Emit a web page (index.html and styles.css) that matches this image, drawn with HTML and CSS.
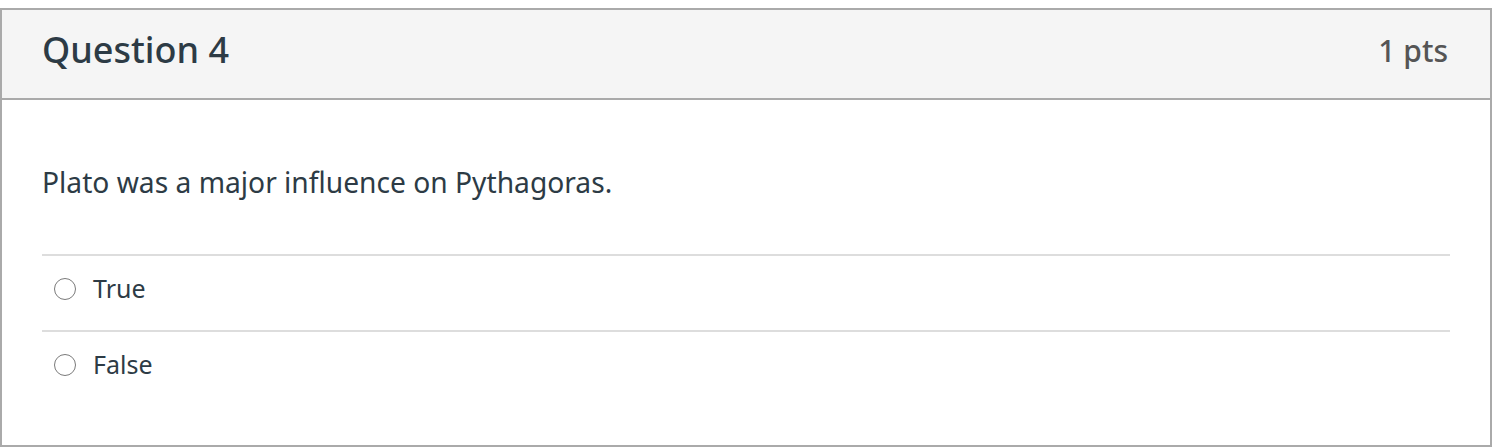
FILE: index.html
```html
<!DOCTYPE html>
<html>
<head>
<meta charset="utf-8">
<link rel="stylesheet" href="styles.css">
</head>
<body>
<div class="question">
  <div class="header">
    <h2 class="title">Question 4</h2>
    <span class="points">1 pts</span>
  </div>
  <div class="content">
    <p class="text">Plato was a major influence on Pythagoras.</p>
    <div class="answers">
      <label class="answer"><span class="radio"></span><span class="label">True</span></label>
      <label class="answer"><span class="radio"></span><span class="label">False</span></label>
    </div>
  </div>
</div>
</body>
</html>
```
FILE: styles.css
```css
html, body {
  margin: 0;
  padding: 0;
  background: #fff;
}
body {
  padding-top: 8px;
  font-family: "Noto Sans", "Open Sans", sans-serif;
  color: #2d3b45;
}
.question {
  width: 1492px;
  height: 439px;
  box-sizing: border-box;
  border: 2px solid #aaaaaa;
  display: flex;
  flex-direction: column;
}
.header {
  height: 90px;
  box-sizing: border-box;
  background: #f5f5f5;
  border-bottom: 2px solid #aaaaaa;
  display: flex;
  align-items: center;
  justify-content: space-between;
  padding: 0 42px 9px 40px;
  flex: none;
}
.title {
  margin: 0;
  font-size: 36px;
  font-weight: 500;
  line-height: 44px;
  color: #2d3b45;
}
.points {
  font-size: 30px;
  font-weight: 500;
  line-height: 40px;
  margin-top: 3px;
  color: #555555;
}
.content {
  padding: 0 40px 0 40px;
}
.text {
  margin: 0;
  padding: 62px 0 0 0;
  height: 92px;
  font-size: 28.2px;
  line-height: 40px;
}
.answers {
  display: flex;
  flex-direction: column;
}
.answer {
  height: 76px;
  box-sizing: border-box;
  border-top: 2px solid #dddddd;
  display: flex;
  align-items: flex-start;
  padding: 15px 0 0 12px;
}
.radio {
  width: 20px;
  height: 20px;
  margin-top: 7px;
  border: 1.7px solid #7a7a7a;
  border-radius: 50%;
  margin-right: 17px;
  flex: none;
}
.label {
  font-size: 25px;
  line-height: 34px;
  color: #2d3b45;
}
```
